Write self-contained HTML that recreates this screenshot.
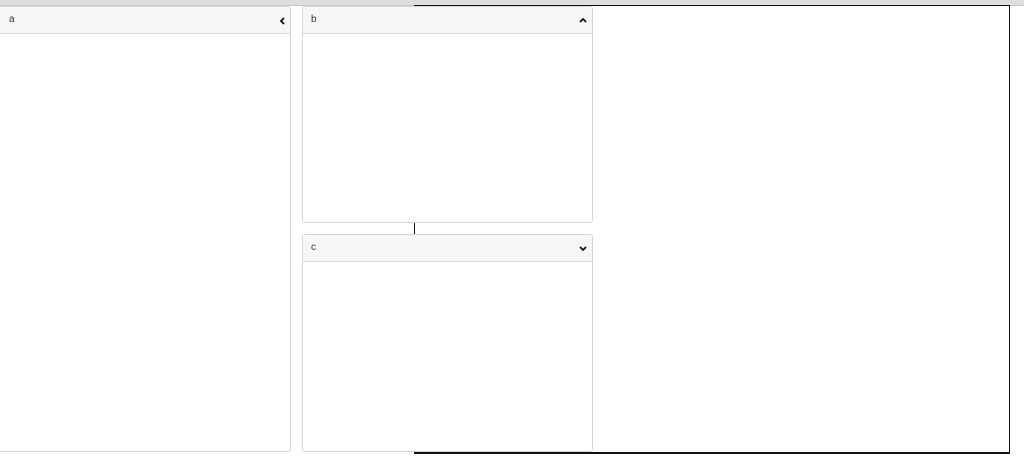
<!DOCTYPE html>
<html><head><style>
html,body{margin:0;padding:0;width:1024px;height:476px;overflow:hidden;background:#fff;font-family:"Liberation Sans",sans-serif;}
.top{position:absolute;left:0;top:0;width:1024px;height:5px;background:#dedede;border-bottom:1px solid #c8c8c8;}
.box{position:absolute;left:414px;top:5px;width:594px;height:446px;border:1px solid #111;border-bottom-width:2px;}
.p{position:absolute;border:1px solid #d6d6d6;border-radius:3px;background:#fff;box-sizing:border-box;}
.h{height:27px;background:#f7f7f7;border-bottom:1px solid #dcdcdc;box-sizing:border-box;font-size:10px;color:#333;padding:7px 0 0 8px;position:relative;}
.h svg{position:absolute;right:5px;top:10px;}
</style></head><body>
<div class="top"></div>
<div class="box"></div>
<div class="p" style="left:-4px;top:6px;width:295px;height:446px;">
 <div class="h" style="padding-left:12px">a<svg width="6" height="8" viewBox="0 0 6 8" style="right:5px"><path d="M5 1L2 4L5 7" stroke="#111" stroke-width="1.8" fill="none"/></svg></div>
</div>
<div class="p" style="left:302px;top:6px;width:291px;height:217px;">
 <div class="h">b<svg width="8" height="6" viewBox="0 0 8 6"><path d="M1 5L4 2L7 5" stroke="#111" stroke-width="1.8" fill="none"/></svg></div>
</div>
<div class="p" style="left:302px;top:234px;width:291px;height:218px;">
 <div class="h">c<svg width="8" height="6" viewBox="0 0 8 6" style="top:11px"><path d="M1 1L4 4L7 1" stroke="#111" stroke-width="1.8" fill="none"/></svg></div>
</div>
</body></html>
